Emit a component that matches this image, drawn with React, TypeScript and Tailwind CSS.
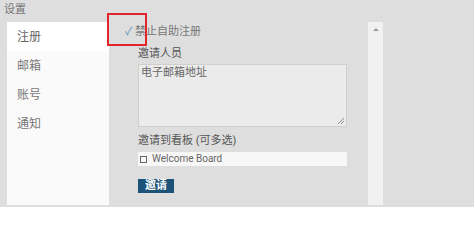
import React from 'react';

const menu = ['注册', '邮箱', '账号', '通知'];

const App = () => {
  return (
    <div
      className="relative w-[474px] h-[207px] overflow-hidden bg-[#dedede] text-[#666]"
      style={{ fontFamily: "Roboto, 'Noto Sans CJK SC', sans-serif" }}
    >
      {/* Header */}
      <div className="h-[22px] pl-[4px] pt-[3px] text-[11px] leading-[14px] text-[#777]">设置</div>

      <div className="flex h-[183px]">
        {/* Sidebar */}
        <div className="ml-[7px] w-[102px] bg-[#fafafa]">
          {menu.map((item, i) => (
            <div
              key={item}
              className={`h-[29px] pl-[10px] flex items-center text-[12px] ${i === 0 ? 'bg-white text-[#666]' : 'text-[#777]'}`}
            >
              {item}
            </div>
          ))}
        </div>

        {/* Main */}
        <div className="w-[259px] pl-[16px] pt-[3px]">
          <div className="flex items-center h-[14px] text-[11px] leading-[14px]">
            <span className="text-[#5b8fbf] text-[11px] w-[10px]">✓</span>
            <span className="text-[#777]">禁止自助注册</span>
          </div>

          <div className="ml-[13px] mt-[8px] w-[209px]">
            <div className="text-[11px] leading-[14px] text-[#555]">邀请人员</div>
            <div className="relative mt-[3px] h-[63px] bg-[#ebebeb] border border-[#cfcfcf] px-[2px] pt-[1px] text-[11px] leading-[13px] text-[#666]">
              电子邮箱地址
              <svg className="absolute right-[1px] bottom-[1px]" width="8" height="8" viewBox="0 0 8 8">
                <path d="M7 1 L1 7 M7 4 L4 7" stroke="#888" strokeWidth="1" />
              </svg>
            </div>

            <div className="mt-[7px] text-[11px] leading-[14px] text-[#555]">邀请到看板 (可多选)</div>
            <div className="mt-[4px] h-[14px] bg-[#f7f7f7] flex items-center pl-[2px] text-[10px] leading-[14px] text-[#666]">
              <span className="inline-block w-[7px] h-[7px] border border-[#666] mr-[5px]" />
              Welcome Board
            </div>

            <div className="mt-[13px] w-[36px] h-[14px] bg-[#1b5478] flex items-center justify-center text-white text-[11px] font-bold leading-[14px]">
              邀请
            </div>
          </div>
        </div>

        {/* Scrollbar */}
        <div className="w-[15px] bg-[#f1f1f1] flex justify-center pt-[6px]">
          <div className="w-0 h-0 border-l-[3px] border-r-[3px] border-b-[3px] border-l-transparent border-r-transparent border-b-[#999]" />
        </div>
      </div>

      {/* Annotation */}
      <div className="absolute left-[107px] top-[13px] w-[40px] h-[33px] border-2 border-[#e0262b]" />
    </div>
  );
};

export default App;
